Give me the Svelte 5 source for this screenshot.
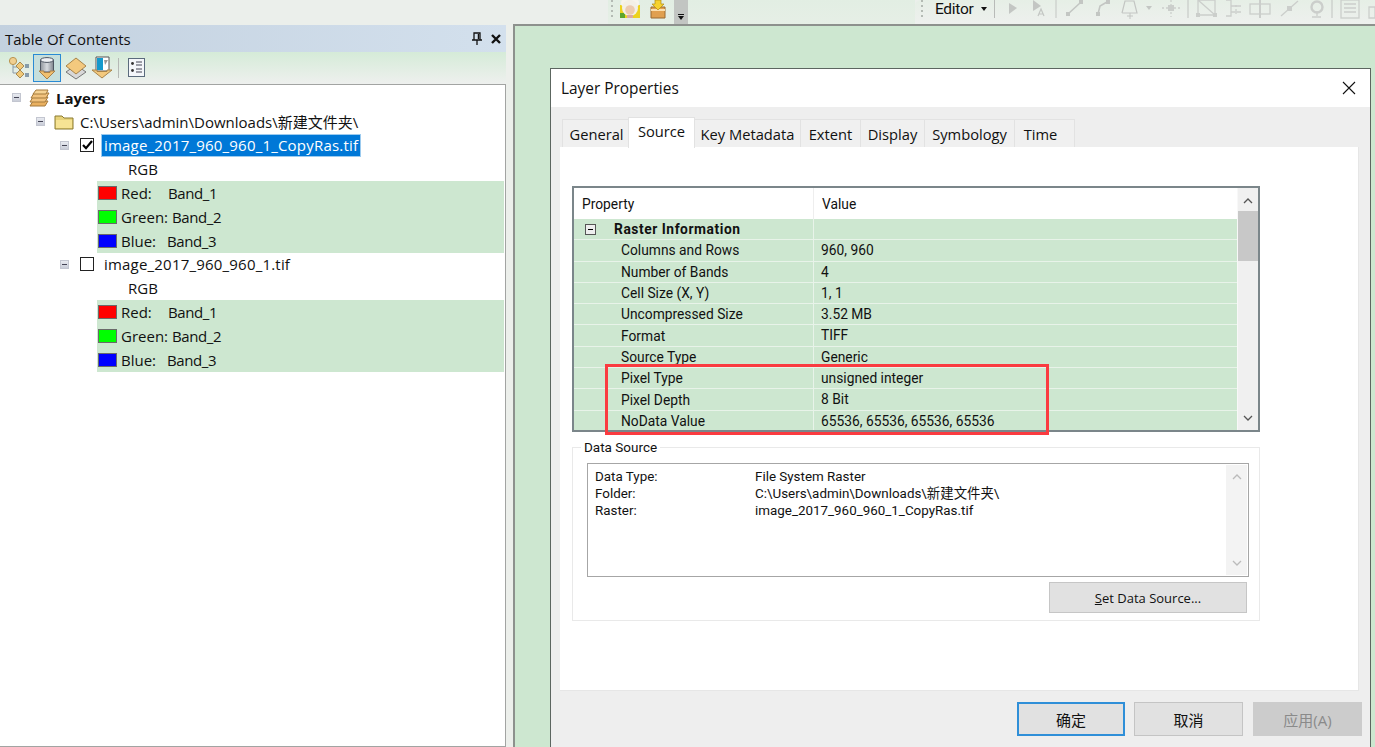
<script>
  const layers = [
    { name: "image_2017_960_960_1_CopyRas.tif", checked: true },
    { name: "image_2017_960_960_1.tif", checked: false },
  ];
  const bands = [
    { label: "Red:", gap: "bred", band: "Band_1", color: "#ff0000" },
    { label: "Green:", gap: "bgreen", band: "Band_2", color: "#00ff00" },
    { label: "Blue:", gap: "bblue", band: "Band_3", color: "#0000ff" },
  ];
  const tabs = [
    { name: "General", width: 67 },
    { name: "Source", width: 67 },
    { name: "Key Metadata", width: 107 },
    { name: "Extent", width: 61 },
    { name: "Display", width: 65 },
    { name: "Symbology", width: 91 },
    { name: "Time", width: 61 },
  ];
  const props = [
    ["Columns and Rows", "960, 960"],
    ["Number of Bands", "4"],
    ["Cell Size (X, Y)", "1, 1"],
    ["Uncompressed Size", "3.52 MB"],
    ["Format", "TIFF"],
    ["Source Type", "Generic"],
    ["Pixel Type", "unsigned integer"],
    ["Pixel Depth", "8 Bit"],
    ["NoData Value", "65536, 65536, 65536, 65536"],
  ];
  const source = [
    ["Data Type:", "File System Raster"],
    ["Folder:", "C:\\Users\\admin\\Downloads\\新建文件夹\\"],
    ["Raster:", "image_2017_960_960_1_CopyRas.tif"],
  ];
</script>

<div class="page">
  <header class="topbar">
    <div class="tools-a">
      <span class="grip"></span>
      <svg class="sheep" width="20" height="19" viewBox="0 0 20 19">
        <rect x="0" y="5" width="20" height="13" fill="#ecd21e" />
        <rect x="0" y="13" width="5" height="5" fill="#5da52c" />
        <circle cx="5" cy="3" r="4" fill="#f6f3ec" />
        <circle cx="15" cy="3" r="4" fill="#f6f3ec" />
        <circle cx="10" cy="8" r="8" fill="#f3efe6" />
        <circle cx="10" cy="10" r="4.8" fill="#eccab0" />
        <path d="M7 15h6v3H7z" fill="#dca9a0" />
      </svg>
      <svg class="parcel" width="16" height="19" viewBox="0 0 16 19">
        <path d="M1 7h14v11H1z" fill="#e0a050" stroke="#9a6a30" />
        <path d="M1 10h14" stroke="#fbe0b0" stroke-width="2" />
        <path d="M5 0h6v4h3l-6 6-6-6h3z" fill="#f6d22e" stroke="#b08a10" stroke-width=".7" />
      </svg>
      <span class="more"><i></i><b></b></span>
    </div>
    <div class="tools-b">
      <span class="grip"></span>
      <span class="editor">Editor</span>
      <span class="caret"></span>
      <span class="vsep"></span>
      <!-- origin of this strip is x=1000 -->
      <svg class="dis s1" width="160" height="20" viewBox="0 0 160 20" fill="none" stroke="#c3c6c3" stroke-width="1.6">
        <path d="M9 3l8 5-8 6z" fill="#c3c6c3" stroke="none" />
        <path d="M33 0l8 6-8 5z" fill="#c3c6c3" stroke="none" />
        <path d="M38 16l3-7 3 7M39 14h4" stroke-width="1.2" />
        <path d="M56 0v18" stroke-width="1" />
        <path d="M68 14L80 3" />
        <rect x="66" y="12" width="4" height="4" fill="#c3c6c3" stroke="none" />
        <rect x="79" y="0" width="4" height="4" fill="#c3c6c3" stroke="none" />
        <path d="M98 14l2-8 7-4" />
        <rect x="96" y="12" width="4" height="4" fill="#c3c6c3" stroke="none" />
        <rect x="106" y="0" width="4" height="4" fill="#c3c6c3" stroke="none" />
        <path d="M122 13l3-12h9l3 12h-15" stroke-width="1.2" />
        <path d="M127 16h6M130 13v6" stroke-width="1" />
        <path d="M146 6h6l-3 4z" fill="#c3c6c3" stroke="none" />
      </svg>
      <!-- origin of this strip is x=1160 -->
      <svg class="dis" width="215" height="20" viewBox="0 0 215 20" fill="none" stroke="#cbcecb" stroke-width="1.3">
        <path d="M2 8h18M11 0v17" stroke-dasharray="2 2" />
        <rect x="8" y="5" width="6" height="6" fill="#cbcecb" stroke="none" />
        <path d="M28 0v18" stroke-width="1" stroke="#c0c3c0" />
        <path d="M38 0h17v15H38zM38 0l17 15" />
        <rect x="36" y="13" width="4" height="4" fill="#cbcecb" stroke="none" />
        <rect x="53" y="13" width="4" height="4" fill="#cbcecb" stroke="none" />
        <path d="M66 0h5v16h-5M71 6h10M71 12h10" />
        <path d="M76 5v9" stroke-dasharray="2 2" />
        <rect x="90" y="4" width="20" height="10" />
        <path d="M100 0v18" stroke-width="2" />
        <path d="M121 16L138 1" />
        <rect x="127" y="6" width="5" height="5" fill="#cbcecb" stroke="none" />
        <circle cx="157" cy="7" r="5.5" stroke-width="2.4" />
        <path d="M157 11v5M152 17h9" />
        <path d="M172 0v18" stroke-width="1" stroke="#c0c3c0" />
        <rect x="181" y="0" width="18" height="18" />
        <path d="M184 4h12M184 8h12M184 12h12" />
        <path d="M209 7h6v11h-6z" />
      </svg>
    </div>
  </header>

  <div class="body">
    <aside class="toc">
      <div class="toc-title">
        <span>Table Of Contents</span>
        <span class="title-btns">
          <svg width="12" height="14" viewBox="0 0 12 14"><path d="M3 1h6v7H3zM1 8h10M6 8v5M7.4 2v5" fill="none" stroke="#111" stroke-width="1.3" /></svg>
          <svg width="12" height="12" viewBox="0 0 12 12"><path d="M2 2l8 8M10 2l-8 8" stroke="#111" stroke-width="2.4" /></svg>
        </span>
      </div>
      <div class="toc-tools">
        <svg width="22" height="24" viewBox="0 0 22 24" fill="none">
          <path d="M5 7v10h6M5 11h6" stroke="#8a9aa8" />
          <circle cx="5" cy="5" r="3.6" fill="#f0cf90" stroke="#b99450" />
          <path d="M12 6l4 4-4 4-4-4z" fill="#f0c878" stroke="#a88a50" />
          <path d="M12 14l4 4-4 4-4-4z" fill="#f0c878" stroke="#a88a50" />
          <path d="M17 9h4M17 11h4M17 18h4M17 20h4" stroke="#2a4a70" />
        </svg>
        <span class="tool-on">
          <svg width="20" height="24" viewBox="0 0 20 24">
            <defs>
              <linearGradient id="cyl" x1="0" x2="1" y1="0" y2="0">
                <stop offset="0" stop-color="#8f949c" />
                <stop offset=".5" stop-color="#d8dbe0" />
                <stop offset="1" stop-color="#7e838c" />
              </linearGradient>
            </defs>
            <path d="M3.5 4h13v12h-13z" fill="url(#cyl)" stroke="#4d5562" />
            <ellipse cx="10" cy="4" rx="6.5" ry="2.4" fill="#eef0f4" stroke="#4d5562" />
            <path d="M2 15h5v1.5h6V15h5l-8 8z" fill="#f0c070" stroke="#a8804a" />
          </svg>
        </span>
        <svg width="24" height="24" viewBox="0 0 24 24">
          <path d="M12 9l10 7-10 7-10-7z" fill="#d8d8d8" stroke="#777" />
          <path d="M12 2l10 8-10 8-10-8z" fill="#f3c97e" stroke="#a8844a" />
        </svg>
        <svg width="22" height="24" viewBox="0 0 22 24">
          <path d="M5 1h13v14H5z" fill="#fff" stroke="#555" />
          <path d="M6 2h6v12H6z" fill="#1599cc" />
          <path d="M13 4h4l-3 5z" fill="#999" />
          <path d="M1 14h5v1.5h10V14h5l-10 8z" fill="#f3c97e" stroke="#a8844a" />
        </svg>
        <span class="tool-sep"></span>
        <svg width="18" height="20" viewBox="0 0 18 20" fill="none">
          <rect x=".5" y=".5" width="16" height="18" fill="#f4f6fa" stroke="#5b6b7d" />
          <circle cx="4.5" cy="5.5" r="1.4" fill="#333" />
          <circle cx="4.5" cy="12.5" r="1.4" fill="#333" />
          <path d="M8 4h6M8 7h6M8 11h6M8 14h6" stroke="#445" />
        </svg>
      </div>
      <div class="tree">
        <div class="row root">
          <span class="box"></span>
          <svg class="layers-ic" width="22" height="18" viewBox="0 0 22 18">
            <path d="M5 12h15l-3 5H2z" fill="#e9b060" stroke="#a57a3c" />
            <path d="M5 8h15l-3 5H2z" fill="#f1c27d" stroke="#a57a3c" />
            <path d="M6 4h15l-3 5H3z" fill="#f1c27d" stroke="#a57a3c" />
            <path d="M8 1h12l-2 4H5z" fill="#f6d394" stroke="#a57a3c" />
          </svg>
          <b>Layers</b>
        </div>
        <div class="row folder">
          <span class="box"></span>
          <svg width="20" height="16" viewBox="0 0 20 16">
            <path d="M1 2h7l2 2h9v11H1z" fill="#e7d27a" stroke="#8a7a30" />
            <path d="M2 6h16v8H2z" fill="#f6e394" />
          </svg>
          <span>C:\Users\admin\Downloads\新建文件夹\</span>
        </div>
        {#each layers as layer}
          <div class="row layer">
            <span class="box"></span>
            <span class="check">
              {#if layer.checked}
                <svg width="11" height="10" viewBox="0 0 11 10"><path d="M1 5l3 3.2L10 1" fill="none" stroke="#000" stroke-width="2.2" /></svg>
              {/if}
            </span>
            <span class="lname" class:sel={layer.checked}>{layer.name}</span>
          </div>
          <div class="row rgb">RGB</div>
          <div class="bands">
            {#each bands as b}
              <div class="row band">
                <span class="swatch" style="background: {b.color}"></span>
                <span class="blabel {b.gap}">{b.label}</span>
                <span class="bname">{b.band}</span>
              </div>
            {/each}
          </div>
        {/each}
      </div>
    </aside>

    <main class="map">
      <section class="dialog">
        <div class="dlg-title">
          <span>Layer Properties</span>
          <svg width="14" height="14" viewBox="0 0 14 14"><path d="M1 1l12 12M13 1L1 13" stroke="#111" stroke-width="1.1" /></svg>
        </div>
        <div class="tabs">
          {#each tabs as t}
            <span class="tab" class:active={t.name === "Source"} style="width: {t.width}px">{t.name}</span>
          {/each}
        </div>
        <div class="panel">
          <div class="grid-wrap">
            <div class="grid">
              <div class="grid-main">
                <div class="ghead">
                  <span>Property</span>
                  <span>Value</span>
                </div>
                <div class="grow group">
                  <span class="c1">
                    <span class="minus"></span>
                    <b>Raster Information</b>
                  </span>
                  <span class="c2"></span>
                </div>
                {#each props as p}
                  <div class="grow">
                    <span class="c1 item">{p[0]}</span>
                    <span class="c2">{p[1]}</span>
                  </div>
                {/each}
              </div>
              <div class="vbar">
                <svg width="10" height="6" viewBox="0 0 10 6"><path d="M1 5l4-4 4 4" fill="none" stroke="#555" stroke-width="1.3" /></svg>
                <span class="thumb"></span>
                <svg class="dn" width="10" height="6" viewBox="0 0 10 6"><path d="M1 1l4 4 4-4" fill="none" stroke="#555" stroke-width="1.3" /></svg>
              </div>
            </div>
            <span class="redbox"></span>
          </div>

          <fieldset class="ds">
            <legend>Data Source</legend>
            <div class="ds-box">
              <div class="ds-text">
                {#each source as s}
                  <div class="ds-row"><span class="k">{s[0]}</span><span>{s[1]}</span></div>
                {/each}
              </div>
              <div class="vbar2">
                <svg width="10" height="6" viewBox="0 0 10 6"><path d="M1 5l4-4 4 4" fill="none" stroke="#bbb" stroke-width="1.3" /></svg>
                <svg width="10" height="6" viewBox="0 0 10 6"><path d="M1 1l4 4 4-4" fill="none" stroke="#bbb" stroke-width="1.3" /></svg>
              </div>
            </div>
            <div class="ds-actions">
              <button class="setbtn"><u>S</u>et Data Source...</button>
            </div>
          </fieldset>
        </div>
        <div class="foot">
          <button class="fbtn ok">确定</button>
          <button class="fbtn">取消</button>
          <button class="fbtn off">应用(A)</button>
        </div>
      </section>
    </main>
  </div>
</div>

<style>
  :global(body) {
    margin: 0;
    overflow: hidden;
  }
  .page {
    width: 1375px;
    height: 747px;
    overflow: hidden;
    display: flex;
    flex-direction: column;
    background: #ecefeb;
    color: #111;
    font-family: "Open Sans", "Noto Sans CJK SC", sans-serif;
  }
  .topbar {
    height: 25px;
    flex: none;
    display: flex;
    padding-left: 608px;
    box-sizing: border-box;
    background: #ebefeb;
  }
  .tools-a {
    width: 307px;
    display: flex;
    align-items: flex-start;
    background: linear-gradient(#e2eee3, #e6efe6);
    box-sizing: border-box;
    padding-left: 3px;
  }
  .grip {
    width: 2px;
    height: 18px;
    flex: none;
    background: repeating-linear-gradient(#b4bbb4 0 2px, transparent 2px 5px);
  }
  .sheep {
    margin-left: 7px;
  }
  .parcel {
    margin-left: 10px;
  }
  .more {
    margin-left: 8px;
    width: 14px;
    height: 24px;
    background: #c2c5c2;
    display: flex;
    flex-direction: column;
    align-items: center;
    justify-content: flex-end;
    gap: 1px;
    padding-bottom: 4px;
    box-sizing: border-box;
  }
  .more i {
    width: 6px;
    height: 1px;
    background: #111;
  }
  .more b {
    border: 3.5px solid transparent;
    border-top: 4px solid #111;
    border-bottom: 0;
  }
  .tools-b {
    flex: 1;
    display: flex;
    align-items: flex-start;
    padding-left: 6px;
    border-top-left-radius: 6px;
    background: linear-gradient(#e6efe6, #eef0ee);
    overflow: hidden;
  }
  .editor {
    margin-left: 12px;
    width: 40px;
    font-family: Roboto, sans-serif;
    font-size: 15.5px;
    line-height: 18px;
    letter-spacing: -0.3px;
    color: #111;
  }
  .caret {
    margin: 7px 0 0 6px;
    border: 3.5px solid transparent;
    border-top: 4px solid #111;
    border-bottom: 0;
  }
  .vsep {
    margin-left: 7px;
    width: 1px;
    height: 18px;
    flex: none;
    background: #b8bbb8;
  }
  .dis {
    flex: none;
  }
  .s1 {
    margin-left: 5px;
  }
  .body {
    flex: 1;
    display: flex;
    min-height: 0;
  }
  .toc {
    width: 506px;
    flex: none;
    display: flex;
    flex-direction: column;
  }
  .toc-title {
    height: 27px;
    flex: none;
    display: flex;
    align-items: center;
    justify-content: space-between;
    padding: 0 4px 0 5px;
    font-size: 15px;
    background: linear-gradient(90deg, #c3d1df, #d3e0ed);
  }
  .title-btns {
    display: flex;
    align-items: center;
    gap: 7px;
  }
  .toc-tools {
    height: 32px;
    flex: none;
    display: flex;
    align-items: center;
    gap: 3px;
    padding-left: 8px;
    box-sizing: border-box;
    background: linear-gradient(#d5ebd8, #eef0ee);
  }
  .tool-on {
    width: 26px;
    height: 26px;
    display: flex;
    align-items: center;
    justify-content: center;
    border: 1px solid #2a8ad4;
    background: #c6dfdc;
  }
  .tool-sep {
    width: 1px;
    height: 20px;
    background: #b5b8b5;
    margin: 0 6px 0 2px;
  }
  .tree {
    flex: 1;
    background: #fff;
    border: 1px solid #a2a4a2;
    border-left: 0;
    box-sizing: border-box;
    padding-top: 1px;
    font-size: 15px;
  }
  .row {
    height: 23.8px;
    display: flex;
    align-items: center;
    white-space: nowrap;
  }
  .box {
    width: 9px;
    height: 9px;
    flex: none;
    box-sizing: border-box;
    background: linear-gradient(#e8eaf0, #c9cdd8);
    border: 1px solid #c3c6d0;
    position: relative;
  }
  .box::after {
    content: "";
    position: absolute;
    left: 1px;
    right: 1px;
    top: 3px;
    height: 1px;
    background: #445;
  }
  .root {
    padding-left: 12px;
  }
  .layers-ic {
    margin: 0 6px 0 7px;
  }
  .folder {
    padding-left: 36px;
    gap: 6px;
  }
  .folder svg {
    margin-left: 3px;
  }
  .layer {
    padding-left: 60px;
  }
  .check {
    width: 14px;
    height: 14px;
    box-sizing: border-box;
    border: 1px solid #222;
    margin-left: 11px;
    display: flex;
    align-items: center;
    justify-content: center;
  }
  .lname {
    margin-left: 7px;
    padding: 0 3px;
    height: 23px;
    line-height: 23px;
    box-sizing: border-box;
    letter-spacing: 0.2px;
  }
  .lname.sel {
    background: #0078d7;
    color: #fff;
    outline: 1px solid #9ccbef;
    outline-offset: -1px;
  }
  .rgb {
    padding-left: 128px;
  }
  .bands {
    margin: 0 1px 0 97px;
    background: #cde7d0;
  }
  .swatch {
    width: 19px;
    height: 14px;
    box-sizing: border-box;
    border: 1px solid #6a6a6a;
    margin: 0 4px 0 1px;
  }
  .blabel {
    display: inline-block;
  }
  .bname {
    letter-spacing: -0.4px;
  }
  .bred {
    width: 47px;
  }
  .bgreen {
    width: 51px;
  }
  .bblue {
    width: 46px;
  }
  .map {
    flex: 1;
    margin: -1px 0 0 7px;
    border-left: 2px solid #8d918d;
    border-top: 2px solid #8d918d;
    background: #cde7d0;
    position: relative;
  }
  .dialog {
    position: absolute;
    left: 35px;
    top: 42px;
    width: 821px;
    height: 700px;
    box-sizing: border-box;
    border: 1px solid #5c6660;
    background: #eeeeee;
    display: flex;
    flex-direction: column;
  }
  .dlg-title {
    height: 38px;
    flex: none;
    background: #fff;
    display: flex;
    align-items: center;
    justify-content: space-between;
    padding: 0 14px 0 10px;
    font-size: 15.4px;
  }
  .tabs {
    margin: 12px 0 0 12px;
    height: 28px;
    display: flex;
    align-items: flex-end;
    flex: none;
    font-size: 14.7px;
  }
  .tab {
    height: 28px;
    box-sizing: border-box;
    border: 1px solid #e2e2e2;
    border-bottom: 0;
    margin-left: -1px;
    display: flex;
    align-items: center;
    justify-content: center;
    background: #f0f0f0;
  }
  .tab:first-child {
    padding-left: 2px;
  }
  .tab:last-child {
    padding-right: 8px;
  }
  .tab.active {
    height: 31px;
    background: #fff;
    margin-bottom: -1px;
    padding-bottom: 5px;
    position: relative;
  }
  .panel {
    width: 799px;
    height: 544px;
    margin-left: 9px;
    flex: none;
    background: #fff;
    box-sizing: border-box;
    padding: 39px 98px 0 12px;
    border-right: 1px solid #e6e6e6;
    border-bottom: 1px solid #e6e6e6;
  }
  .grid-wrap {
    position: relative;
  }
  .grid {
    height: 246px;
    box-sizing: border-box;
    border: 2px solid #7b868a;
    display: flex;
    font-family: Roboto, "Noto Sans CJK SC", sans-serif;
    font-size: 13.8px;
    overflow: hidden;
  }
  .grid-main {
    flex: 1;
    min-width: 0;
  }
  .ghead {
    height: 31px;
    display: grid;
    grid-template-columns: 239px 1fr;
    align-items: center;
  }
  .ghead span {
    padding-left: 8px;
    height: 100%;
    display: flex;
    align-items: center;
  }
  .ghead span + span {
    border-left: 1px solid #eee;
  }
  .grow {
    height: 21.3px;
    box-sizing: border-box;
    display: grid;
    grid-template-columns: 239px 1fr;
    background: #cde7d0;
    border-bottom: 1px solid #e8f3e9;
    line-height: 20px;
  }
  .group b {
    letter-spacing: 0.55px;
  }
  .c2 {
    border-left: 1px solid #e8f3e9;
    padding-left: 7px;
  }
  .c1 {
    display: flex;
    align-items: center;
  }
  .item {
    padding-left: 47px;
  }
  .minus {
    width: 11px;
    height: 11px;
    box-sizing: border-box;
    border: 1px solid #555;
    background: #eee;
    margin: 0 18px 0 11px;
    position: relative;
  }
  .minus::after {
    content: "";
    position: absolute;
    left: 2px;
    right: 2px;
    top: 4px;
    height: 1px;
    background: #000;
  }
  .vbar {
    width: 21px;
    flex: none;
    background: #f0f0f0;
    border-left: 1px solid #f8f8f8;
    display: flex;
    flex-direction: column;
    align-items: center;
    padding-top: 10px;
    box-sizing: border-box;
  }
  .thumb {
    align-self: stretch;
    height: 50px;
    margin-top: 7px;
    background: #c8c8c8;
  }
  .dn {
    margin-top: auto;
    margin-bottom: 9px;
  }
  .redbox {
    position: absolute;
    left: 33px;
    top: 178px;
    width: 444px;
    height: 71px;
    box-sizing: border-box;
    border: 3px solid #fa3b40;
  }
  .ds {
    margin: 7px 0 0;
    padding: 0;
    height: 182px;
    box-sizing: border-box;
    border: 1px solid #e9e9e9;
    font-family: Roboto, "Noto Sans CJK SC", sans-serif;
    font-size: 13.4px;
  }
  .ds legend {
    margin-left: 8px;
    padding: 0 3px;
    font-size: 13.5px;
    line-height: 16px;
  }
  .ds-box {
    margin: 8px 10px 0 14px;
    height: 114px;
    box-sizing: border-box;
    border: 1px solid #a6a6a6;
    display: flex;
  }
  .ds-text {
    flex: 1;
    padding: 4px 0 0 7px;
  }
  .ds-row {
    height: 17px;
    line-height: 17px;
    display: flex;
  }
  .k {
    width: 160px;
  }
  .vbar2 {
    width: 21px;
    margin: 1px 1px 1px 0;
    background: #f3f3f3;
    display: flex;
    flex-direction: column;
    justify-content: space-between;
    align-items: center;
    padding: 9px 0;
    box-sizing: border-box;
  }
  .ds-actions {
    display: flex;
    justify-content: flex-end;
    margin: 5px 12px 0 0;
  }
  button {
    font-family: "Open Sans", "Noto Sans CJK SC", sans-serif;
    color: #111;
    padding: 0;
  }
  .setbtn {
    width: 198px;
    height: 31px;
    background: #e1e1e1;
    border: 1px solid #c6c6c6;
    font-size: 13px;
  }
  .foot {
    display: flex;
    gap: 9px;
    margin: 11px 0 0 466px;
  }
  .fbtn {
    width: 109px;
    height: 34px;
    background: #e1e1e1;
    border: 1px solid #c4c4c4;
    font-size: 15px;
  }
  .fbtn.ok {
    width: 108px;
    border: 2px solid #2f8fd8;
  }
  .fbtn.off {
    background: #cccccc;
    border-color: #cccccc;
    color: #8a8a8a;
    margin-left: 1px;
  }
</style>
